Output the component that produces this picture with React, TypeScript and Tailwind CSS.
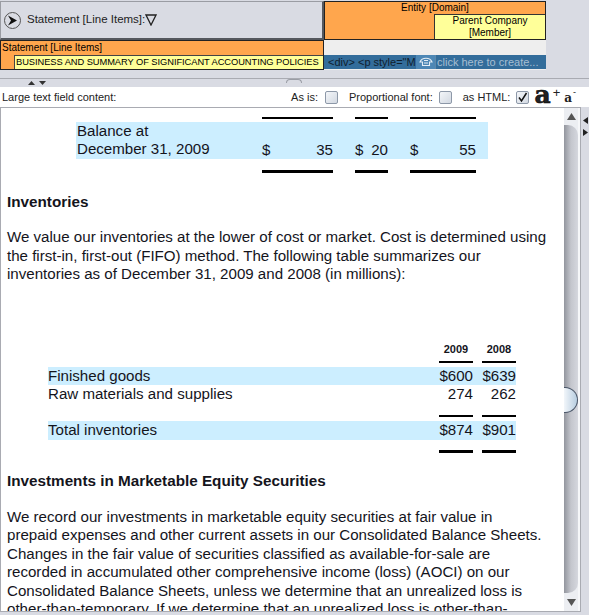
const Rule = ({ w, thick }: { w: string; thick?: boolean }) => (
    <div className={`${w} ${thick ? 'h-[3px]' : 'h-[2px]'} bg-black`}></div>
);

const Check = ({ on }: { on?: boolean }) => (
    <div className="w-[13px] h-[13px] rounded-[2px] border border-[#8d98a8] bg-gradient-to-br from-[#f4f6f9] to-[#d3d9e2] flex items-center justify-center">
        {on && (
            <svg width="11" height="11" viewBox="0 0 11 11">
                <path d="M2 5.5 L4.5 9 L9.5 1" fill="none" stroke="#111" strokeWidth="1.5" />
            </svg>
        )}
    </div>
);

export default function App() {
    return (
        <div className="w-[589px] h-[615px] overflow-hidden bg-[#d9dbe3] flex flex-col font-['Liberation_Sans',Arial,sans-serif] text-black">
            {/* Header grid */}
            <div className="h-[70px] shrink-0 flex flex-col pt-px">
                <div className="flex h-[39px]">
                    <div className="w-[324px] pl-[3px] flex items-center gap-[4px] border-t border-l border-b-2 border-r-2 border-t-[#9a9ca3] border-l-[#9a9ca3] border-b-[#55585e] border-r-[#55585e] text-[11.5px] text-[#222]">
                        <div className="w-[17px] h-[17px] rounded-full border border-[#555] flex items-center justify-center">
                            <svg width="11" height="11" viewBox="0 0 11 11">
                                <path d="M1 0.5 L10 5.5 L1 10.5 L4 5.5 Z" fill="#111" />
                            </svg>
                        </div>
                        <span className="ml-[2px]">Statement [Line Items]:</span>
                        <svg width="12" height="12" viewBox="0 0 12 12" className="-ml-[4px]">
                            <path d="M1 1 H11 L6 11 Z" fill="none" stroke="#222" strokeWidth="1.3" />
                        </svg>
                    </div>
                    <div className="w-[222px] bg-[#ffa64d] border border-[#222] flex flex-col">
                        <div className="h-[12px] text-[10px] leading-[12px] text-center">Entity [Domain]</div>
                        <div className="flex-1 flex justify-end">
                            <div className="w-[111px] bg-[#ffff99] border-l border-t border-[#333] text-[10px] leading-[12px] text-center">
                                Parent Company<br />[Member]
                            </div>
                        </div>
                    </div>
                </div>
                <div className="flex h-[30px]">
                    <div className="w-[324px] bg-[#ffa64d] border border-[#222] flex flex-col">
                        <div className="h-[14px] text-[10px] leading-[14px] pl-px">Statement [Line Items]</div>
                        <div className="flex-1 ml-[13px] bg-[#ffff99] border-l border-t border-[#444] text-[9.3px] tracking-[-0.05px] leading-[13px] pl-[1px] whitespace-nowrap overflow-hidden">
                            BUSINESS AND SUMMARY OF SIGNIFICANT ACCOUNTING POLICIES
                        </div>
                    </div>
                    <div className="w-[222px] flex flex-col bg-[#eeeeee]">
                        <div className="h-[15px]"></div>
                        <div className="h-[14px] bg-[#336d9b] flex text-[11px] leading-[14px]">
                            <div className="w-[111px] pl-[4px] flex whitespace-nowrap overflow-hidden text-[#10202e]">
                                <span className="w-[88px] overflow-hidden">&lt;div&gt; &lt;p style="M</span>
                                <div className="w-[19px] bg-[#4d87b5] flex items-center justify-center">
                                    <svg width="14" height="10" viewBox="0 0 14 10">
                                        <path d="M1 5 C3 0,11 0,13 5 L10.5 5 L10.5 8.5 L3.5 8.5 L3.5 5 Z M5 3.5 H9 M5 6 H9" fill="none" stroke="#e6eff6" strokeWidth="1.1" />
                                    </svg>
                                </div>
                            </div>
                            <div className="flex-1 pl-px border-l border-[#5c88aa] text-[#a6bed2] whitespace-nowrap">click here to create...</div>
                        </div>
                    </div>
                </div>
            </div>

            {/* Splitter */}
            <div className="h-[9px] mt-[8px] shrink-0 flex items-center pl-[28px] relative border-t border-[#a9abb2]">
                <svg width="18" height="4" viewBox="0 0 18 4">
                    <path d="M0 4 L3.5 0 L7 4 Z M11 0 L18 0 L14.5 4 Z" fill="#333" />
                </svg>
                <div className="absolute left-[286px] top-0 w-[16px] h-[4px] rounded-t border border-b-0 border-[#9a9da5]"></div>
            </div>

            {/* Option bar */}
            <div className="h-[20px] shrink-0 bg-white flex items-center text-[11px] text-[#222] pl-[2px] pr-[13px]">
                <span>Large text field content:</span>
                <span className="ml-auto">As is:</span>
                <div className="ml-[7px]"><Check /></div>
                <span className="ml-[11px]">Proportional font:</span>
                <div className="ml-[6px]"><Check /></div>
                <span className="ml-[11px]">as HTML:</span>
                <div className="ml-[6px]"><Check on /></div>
                <span className="ml-[5px] font-['DejaVu_Serif',serif] font-bold text-[25px] leading-[22px] -mt-[5px] [-webkit-text-stroke:0.6px_black]">a</span>
                <span className="ml-[2px] text-[13px] leading-[12px] -mt-[8px]">+</span>
                <span className="ml-[4px] font-['DejaVu_Serif',serif] font-bold text-[12px] leading-[11px] mt-[3px]">a</span>
                <span className="ml-[1px] text-[9px] leading-[9px] -mt-[9px]">-</span>
            </div>

            {/* Body */}
            <div className="flex-1 min-h-0 flex pb-[3px]">
                <div className="w-[580px] shrink-0 flex border-t border-b border-l border-[#a9abb2]">
                    <div className="flex-1 min-w-0 bg-white overflow-hidden text-[15.1px] leading-[18.4px] text-[#14141c] pl-[6px]">
                        {/* Balance table */}
                        <div className="ml-[255px] mt-[9px] flex gap-[22px]">
                            <Rule w="w-[71px]" />
                            <Rule w="w-[33px]" />
                            <Rule w="w-[66px]" />
                        </div>
                        <div className="ml-[69px] w-[412px] h-[37px] mt-[3px] bg-[#cceeff] flex">
                            <div className="w-[186px] pl-px">Balance at<br />December 31, 2009</div>
                            <div className="flex flex-col justify-end flex-1">
                                <div className="flex">
                                    <div className="w-[71px] flex justify-between"><span>$</span><span>35</span></div>
                                    <div className="w-[33px] ml-[22px] flex justify-between"><span>$</span><span>20</span></div>
                                    <div className="w-[66px] ml-[22px] flex justify-between"><span>$</span><span>55</span></div>
                                </div>
                            </div>
                        </div>
                        <div className="ml-[255px] mt-[11px] flex gap-[22px]">
                            <Rule w="w-[71px]" thick />
                            <Rule w="w-[33px]" thick />
                            <Rule w="w-[66px]" thick />
                        </div>

                        <div className="font-bold text-[15.25px] mt-[20px]">Inventories</div>
                        <p className="mt-[17px] w-[546px]">
                            We value our inventories at the lower of cost or market. Cost is determined using the first-in, first-out (FIFO) method. The following table summarizes our inventories as of December 31, 2009 and 2008 (in millions):
                        </p>

                        {/* Inventories table */}
                        <div className="ml-[41px] w-[468px] mt-[54px]">
                            <div className="flex justify-end gap-[9px] text-[11px] font-bold h-[18px] leading-[22px]">
                                <div className="w-[34px] text-center">2009</div>
                                <div className="w-[34px] text-center">2008</div>
                            </div>
                            <div className="flex justify-end gap-[9px] mt-[5px]">
                                <Rule w="w-[34px]" />
                                <Rule w="w-[34px]" />
                            </div>
                            <div className="flex bg-[#cceeff] h-[18px] mt-[4px]">
                                <span className="flex-1">Finished goods</span>
                                <span className="w-[34px] text-right">$600</span>
                                <span className="w-[34px] ml-[9px] text-right">$639</span>
                            </div>
                            <div className="flex h-[18px]">
                                <span className="flex-1">Raw materials and supplies</span>
                                <span className="w-[34px] text-right">274</span>
                                <span className="w-[34px] ml-[9px] text-right">262</span>
                            </div>
                            <div className="flex justify-end gap-[9px] mt-[12px]">
                                <Rule w="w-[34px]" />
                                <Rule w="w-[34px]" />
                            </div>
                            <div className="flex bg-[#cceeff] h-[19px] mt-[4px]">
                                <span className="flex-1">Total inventories</span>
                                <span className="w-[34px] text-right">$874</span>
                                <span className="w-[34px] ml-[9px] text-right">$901</span>
                            </div>
                            <div className="flex justify-end gap-[9px] mt-[10px]">
                                <Rule w="w-[34px]" thick />
                                <Rule w="w-[34px]" thick />
                            </div>
                        </div>

                        <div className="font-bold text-[15.25px] mt-[19px]">Investments in Marketable Equity Securities</div>
                        <p className="mt-[18px] w-[539px]">
                            We record our investments in marketable equity securities at fair value in prepaid expenses and other current assets in our Consolidated Balance Sheets. Changes in the fair value of securities classified as available-for-sale are recorded in accumulated other comprehensive income (loss) (AOCI) on our Consolidated Balance Sheets, unless we determine that an unrealized loss is other-than-temporary. If we determine that an unrealized loss is other-than-
                        </p>
                    </div>

                    {/* Scrollbar */}
                    <div className="w-[16px] shrink-0 flex flex-col bg-[#eceef2] border-r-2 border-[#f6f7f9] relative">
                        <div className="h-[17px] flex items-center justify-center">
                            <svg width="9" height="7" viewBox="0 0 9 7"><path d="M0 7 L4.5 0 L9 7 Z" fill="#555" /></svg>
                        </div>
                        <div className="flex-1 rounded-tr-[10px] rounded-br-[10px] bg-gradient-to-r from-[#93969e] via-[#c4c6cd] to-[#d5d7de]"></div>
                        <div className="h-[18px] flex items-center justify-center">
                            <svg width="9" height="7" viewBox="0 0 9 7"><path d="M0 0 L4.5 7 L9 0 Z" fill="#555" /></svg>
                        </div>
                        <div className="absolute left-0 top-[279px] w-[14px] h-[26px] rounded-r-full border border-l-0 border-[#4a5668] bg-gradient-to-r from-[#f2f6fa] to-[#b7cde0]"></div>
                    </div>
                </div>

                {/* Right strip */}
                <div className="flex-1 border-l border-[#a9abb2] flex flex-col items-center pt-[10px] gap-[5px]">
                    <svg width="5" height="7" viewBox="0 0 5 7"><path d="M5 0 L0 3.5 L5 7 Z" fill="#222" /></svg>
                    <svg width="5" height="7" viewBox="0 0 5 7"><path d="M0 0 L5 3.5 L0 7 Z" fill="#222" /></svg>
                </div>
            </div>
        </div>
    );
}
